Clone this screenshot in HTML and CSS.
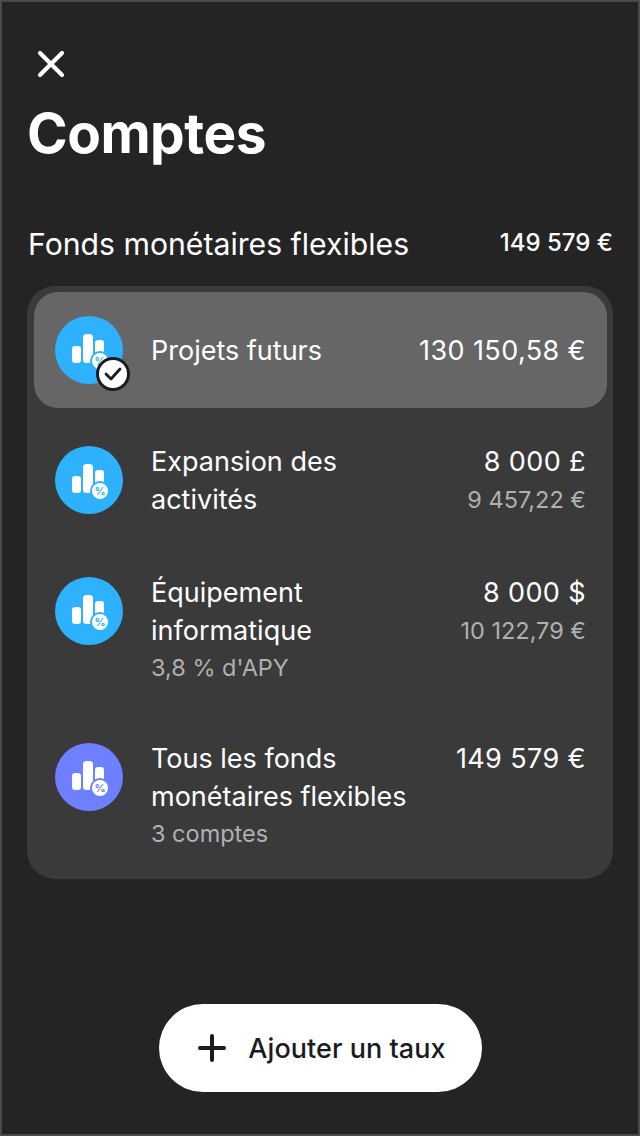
FILE: index.html
```html
<!DOCTYPE html>
<html lang="fr">
<head>
    <meta charset="UTF-8">
    <meta name="viewport" content="width=device-width, initial-scale=1.0">
    <title>Comptes</title>
    <link rel="stylesheet" href="styles.css">
</head>
<body>
    <svg class="icon-defs" width="0" height="0">
        <symbol id="rate" viewBox="0 0 34 34">
            <rect x="0" y="13" width="9" height="17" rx="3" fill="#fff"/>
            <rect x="11" y="1" width="10" height="29" rx="3.5" fill="#fff"/>
            <rect x="23" y="7" width="9" height="23" rx="3" fill="#fff"/>
        </symbol>
    </svg>
    <div class="screen">
        <button class="close-btn" title="Fermer">
            <svg width="28" height="28" viewBox="0 0 28 28"><path d="M3 3 L25 25 M25 3 L3 25" stroke="#fff" stroke-width="4.2" stroke-linecap="round"/></svg>
        </button>
        <h1>Comptes</h1>

        <div class="section-head">
            <h2>Fonds monétaires flexibles</h2>
            <span class="section-total">149 579 €</span>
        </div>

        <div class="list-card">
            <div class="row row-selected">
                <div class="avatar">
                    <svg class="bars" width="34" height="34"><use href="#rate"/></svg>
                    <span class="percent">%</span>
                    <span class="check">
                        <svg width="18" height="14" viewBox="0 0 18 14"><path d="M2 7 L7 12 L16 2" fill="none" stroke="#191c1f" stroke-width="2.8" stroke-linecap="round" stroke-linejoin="round"/></svg>
                    </span>
                </div>
                <div class="row-name">Projets futurs</div>
                <div class="row-amount">130 150,58 €</div>
            </div>

            <div class="row row-two">
                <div class="avatar">
                    <svg class="bars" width="34" height="34"><use href="#rate"/></svg>
                    <span class="percent">%</span>
                </div>
                <div class="row-name">Expansion des<br>activités</div>
                <div class="row-amount">8 000 £<small>9 457,22 €</small></div>
            </div>

            <div class="row row-three">
                <div class="avatar">
                    <svg class="bars" width="34" height="34"><use href="#rate"/></svg>
                    <span class="percent">%</span>
                </div>
                <div class="row-name">Équipement<br>informatique<small>3,8 % d'APY</small></div>
                <div class="row-amount">8 000 $<small>10 122,79 €</small></div>
            </div>

            <div class="row row-all">
                <div class="avatar avatar-violet">
                    <svg class="bars" width="34" height="34"><use href="#rate"/></svg>
                    <span class="percent">%</span>
                </div>
                <div class="row-name">Tous les fonds<br>monétaires flexibles<small>3 comptes</small></div>
                <div class="row-amount">149 579 €</div>
            </div>
        </div>

        <div class="add-wrap">
            <button class="add-btn">
                <svg width="28" height="28" viewBox="0 0 28 28"><path d="M14 2 V26 M2 14 H26" stroke="#191c1f" stroke-width="4" stroke-linecap="round"/></svg>
                Ajouter un taux
            </button>
        </div>
    </div>
</body>
</html>
```

FILE: styles.css
```css
body { margin: 0; background-color: #242424; color: #fff; font-family: Inter, "Liberation Sans", sans-serif; }
.icon-defs { display: block; position: absolute; }
.screen { width: 640px; height: 1136px; box-sizing: border-box; border: 2px solid #4a4a4a; padding: 48px 26px 0 26px; display: flex; flex-direction: column; }

.close-btn { background: none; border: none; padding: 0; margin-left: 9px; width: 28px; height: 28px; cursor: pointer; }
h1 { margin: 21px 0 0 -1px; font-size: 55px; line-height: 68px; font-weight: 700; letter-spacing: -0.5px; }

.section-head { display: flex; justify-content: space-between; align-items: center; margin: 57px -1px 22px 0; }
h2 { margin: 0; font-size: 30.2px; line-height: 40px; font-weight: 400; }
.section-total { font-size: 24px; font-weight: 500; position: relative; top: -2px; }

.list-card { background-color: #3a3a3a; border-radius: 28px; padding: 6px 6px 6px 7px; margin: 0 -1px 0 -1px; }
.row { display: flex; align-items: flex-start; padding: 24px 21px 0 21px; box-sizing: border-box; }
.row-selected { background-color: #666; border-radius: 24px; height: 116px; align-items: center; padding-top: 0; margin-bottom: 14px; }
.row-two { height: 131px; }
.row-three { height: 166px; }
.row-all { height: 154px; }

.avatar { position: relative; flex: none; width: 68px; height: 68px; border-radius: 50%; background-color: #2eb2ff; color: #2eb2ff; }
.avatar-violet { background-color: #6e7fff; color: #6e7fff; }
.bars { position: absolute; left: 17px; top: 17px; }
.percent { position: absolute; left: 37px; top: 37px; width: 16px; height: 16px; border-radius: 50%; background-color: #fff; box-shadow: 0 0 0 2px currentColor; font-size: 11px; line-height: 16px; font-weight: 700; text-align: center; }
.check { position: absolute; right: -7px; bottom: -7px; width: 28px; height: 28px; border-radius: 50%; background-color: #fff; border: 3px solid #191c1f; display: flex; align-items: center; justify-content: center; }

.row-name { flex: 1; margin: -3px 0 0 28px; font-size: 27px; line-height: 38px; }
.row-amount { margin-top: -3px; text-align: right; font-size: 27px; line-height: 38px; letter-spacing: 0.4px; white-space: nowrap; }
.row-selected .row-name, .row-selected .row-amount { margin-top: 1px; }
small { display: block; font-size: 23.5px; line-height: 37px; color: #b0b0b0; letter-spacing: 0; }
.row-name small { margin-top: -1px; }

.add-wrap { display: flex; justify-content: center; margin-top: 125px; }
.add-btn { display: flex; align-items: center; gap: 22px; height: 88px; width: 323px; padding: 0 0 0 4px; justify-content: center; border: none; border-radius: 44px; background-color: #fff; color: #191c1f; font-family: inherit; font-size: 27px; font-weight: 500; letter-spacing: 0.05px; cursor: pointer; }
```
